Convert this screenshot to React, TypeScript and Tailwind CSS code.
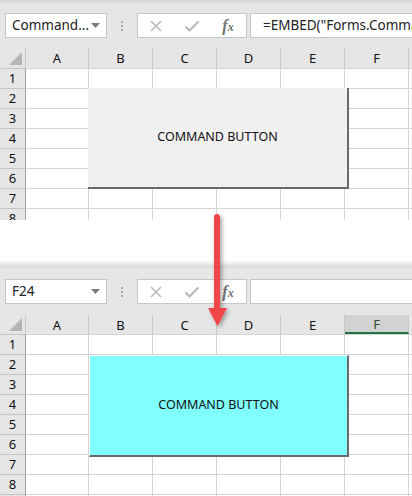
import React from "react";

const COLS = ["A", "B", "C", "D", "E", "F", "G"];
const FONT = { fontFamily: '"Noto Sans", "Open Sans", Arial, sans-serif' };

function XIcon() {
  return (
    <svg width="14" height="14" viewBox="0 0 14 14">
      <path d="M2 2 L12 12 M12 2 L2 12" stroke="#b9b9b9" strokeWidth="1.6" fill="none" />
    </svg>
  );
}
function CheckIcon() {
  return (
    <svg width="16" height="14" viewBox="0 0 16 14">
      <path d="M1.5 7.5 L5.5 11.5 L14.5 2.5" stroke="#b9b9b9" strokeWidth="2.2" fill="none" />
    </svg>
  );
}

function FormulaBar({ name, formula, topPad }: { name: string; formula: string; topPad: string }) {
  return (
    <div className={`flex items-start bg-[#e6e6e6] ${topPad}`}>
      <div className="ml-[5px] flex h-[25px] w-[102px] items-center justify-between border border-[#c6c6c6] bg-white pl-[6px] pr-[6px]">
        <span className="text-[13.5px] leading-none text-[#222]" style={FONT}>{name}</span>
        <svg width="9" height="5" viewBox="0 0 9 5"><path d="M0 0 L9 0 L4.5 5 Z" fill="#7a7a7a" /></svg>
      </div>
      <div className="flex h-[25px] w-[30px] flex-col items-center justify-center gap-[2px]">
        <div className="h-[2px] w-[2px] bg-[#a6a6a6]" />
        <div className="h-[2px] w-[2px] bg-[#a6a6a6]" />
        <div className="h-[2px] w-[2px] bg-[#a6a6a6]" />
      </div>
      <div className="flex h-[25px] w-[110px] items-center border border-[#c6c6c6] bg-white">
        <div className="flex w-[36px] justify-center"><XIcon /></div>
        <div className="flex w-[36px] justify-center"><CheckIcon /></div>
        <div className="flex w-[36px] justify-center">
          <span className="text-[16px] font-bold italic leading-none text-[#737373]" style={{ fontFamily: '"Liberation Serif", serif' }}>
            f<span className="text-[12px]">x</span>
          </span>
        </div>
      </div>
      <div className="ml-[3px] flex h-[25px] flex-1 items-center overflow-hidden whitespace-nowrap border border-r-0 border-[#c6c6c6] bg-white pl-[12px]">
        <span className="text-[13.5px] leading-none text-[#222]" style={FONT}>{formula}</span>
      </div>
    </div>
  );
}

function Sheet({
  name,
  formula,
  topPad,
  headerH,
  rows,
  selected,
  button,
}: {
  name: string;
  formula: string;
  topPad: string;
  headerH: string;
  rows: number;
  selected?: string;
  button: React.ReactNode;
}) {
  const colW = ["w-[63px]", "w-[64px]", "w-[64px]", "w-[64px]", "w-[64px]", "w-[64px]", "w-[64px]"];
  return (
    <div className="flex flex-col">
      <FormulaBar name={name} formula={formula} topPad={topPad} />
      <div className={`flex ${headerH} bg-[#e6e6e6]`}>
        <div className="relative w-[26px] shrink-0 border-r border-[#c9c9c9]">
          <div
            className="absolute bottom-[3px] right-[3px] h-[13px] w-[13px] bg-[#b5b5b5]"
            style={{ clipPath: "polygon(100% 0, 100% 100%, 0 100%)" }}
          />
        </div>
        {COLS.map((c, i) => (
          <div
            key={c}
            className={`${colW[i]} flex shrink-0 items-center justify-center border-r ${
              selected === c ? "border-b-2 border-b-[#217346] bg-[#d2d2d2] text-[#2b4a2b]" : "border-[#c9c9c9] text-[#111]"
            } border-r-[#c9c9c9] pt-[2px] text-[13px]`}
            style={FONT}
          >
            {c === "G" ? "" : c}
          </div>
        ))}
      </div>
      <div className="relative">
        {Array.from({ length: rows }).map((_, r) => (
          <div key={r} className="flex h-[20px]">
            <div
              className="flex w-[26px] shrink-0 items-center justify-center border-r border-t border-r-[#9e9e9e] border-t-[#c4c4c4] bg-[#e6e6e6] text-[13px] text-[#111]"
              style={FONT}
            >
              {r + 1}
            </div>
            {COLS.map((c, i) => (
              <div key={c} className={`${colW[i]} shrink-0 border-r border-t border-[#d4d4d4] bg-white`} />
            ))}
          </div>
        ))}
        {button}
      </div>
    </div>
  );
}

export default function App() {
  return (
    <div className="relative h-[496px] w-[412px] overflow-hidden bg-white">
      <div className="h-[220px] overflow-hidden">
        <div className="h-[4px] bg-gradient-to-b from-[#d0d0d0] to-[#e6e6e6]" />
        <Sheet
          name="Command..."
          formula={'=EMBED("Forms.CommandButton.1","")'}
          topPad="h-[44px] pt-[9px]"
          headerH="h-[20px]"
          rows={8}
          button={
            <div
              className="absolute left-[88px] top-[20px] flex h-[101px] w-[261px] items-center justify-center border-b-2 border-r-2 border-[#6a6a6a] bg-[#f0f0f0] text-[12.5px] text-[#111]"
              style={FONT}
            >
              COMMAND BUTTON
            </div>
          }
        />
      </div>
      <div className="mt-[40px]">
        <div className="h-[8px] bg-gradient-to-b from-[#ffffff] to-[#d6d6d6]" />
        <Sheet
          name="F24"
          formula=""
          topPad="h-[47px] pt-[11px]"
          headerH="h-[19px]"
          rows={9}
          selected="F"
          button={
            <div
              className="absolute left-[89px] top-[21px] flex h-[102px] w-[260px] items-center justify-center border-l border-t border-b-2 border-r-2 border-l-white border-t-white border-b-[#6a6a6a] border-r-[#6a6a6a] bg-[#80ffff] text-[12.5px] text-[#111]"
              style={FONT}
            >
              COMMAND BUTTON
            </div>
          }
        />
      </div>
      <svg className="pointer-events-none absolute left-0 top-0" width="412" height="496" viewBox="0 0 412 496">
        <defs>
          <filter id="sh" x="-50%" y="-50%" width="200%" height="200%">
            <feDropShadow dx="2" dy="2" stdDeviation="2" floodColor="#000" floodOpacity="0.35" />
          </filter>
        </defs>
        <g filter="url(#sh)">
          <line x1="217" y1="217" x2="217" y2="310" stroke="#f04449" strokeWidth="6" strokeLinecap="round" />
          <path d="M208 308 L227 308 L217.5 326 Z" fill="#f04449" />
        </g>
      </svg>
    </div>
  );
}
